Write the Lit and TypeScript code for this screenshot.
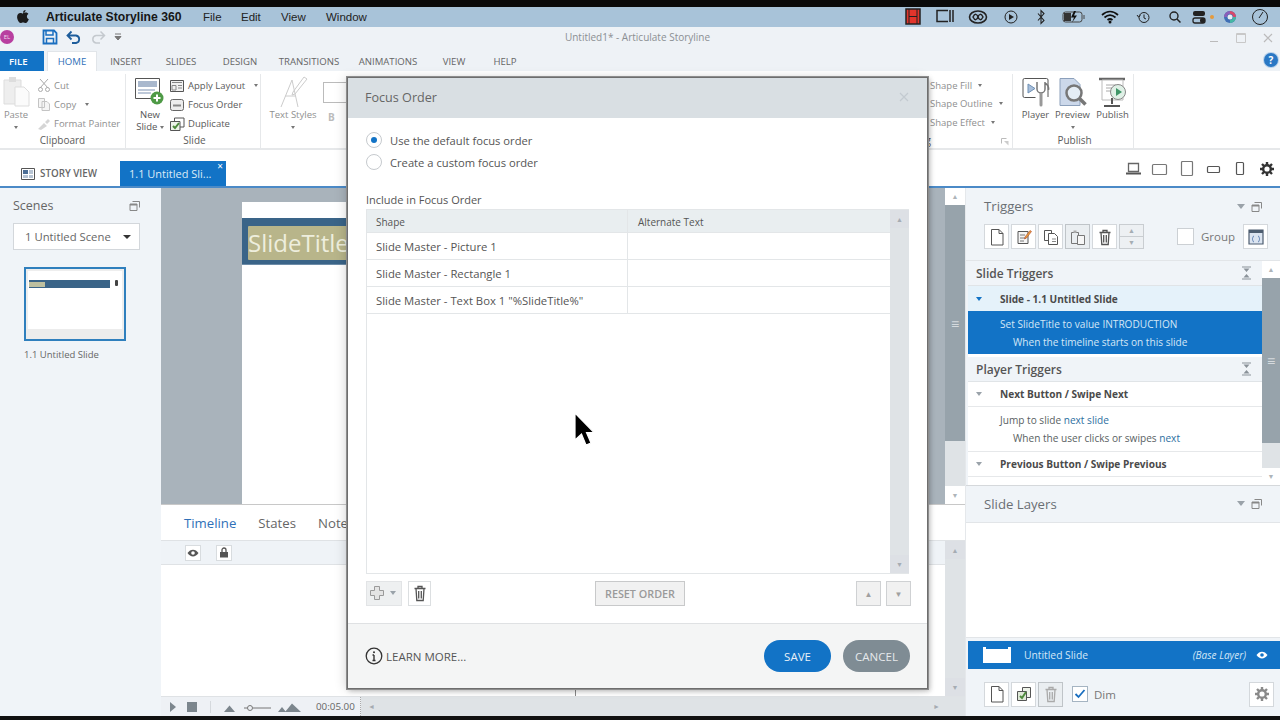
import { LitElement, css, html, svg } from 'lit'
import { customElement } from 'lit/decorators.js'

const icon = (w: number, h: number, body: unknown) => html`<svg width=${w} height=${h} viewBox="0 0 ${w} ${h}" fill="none">${body}</svg>`

const pageIcon = svg`<path d="M4.500 2.500h7.500l4 4v11.500h-11.500z" fill="#fff" stroke="#555"/><path d="M12 2.500v4h4" stroke="#555"/>`
const trashIcon = (c = '#666') => svg`<path d="M4.500 5.500h11M8 5.500v-2h4v2M6 5.500l.8 12h6.400l.8-12M8.700 8v7.500M11.300 8v7.500" stroke=${c} stroke-width="1.300"/>`
const restoreIcon = svg`<path d="M3.500 1.500h7v6M1 4h7v6.500h-7z" stroke="#888"/><path d="M1 4h7v1.500h-7z" fill="#888"/>`
const gearIcon = (c: string) => svg`<circle cx="10" cy="10" r="3.800" stroke=${c} stroke-width="2.400"/><path d="M10 3v3M10 14v3M3 10h3M14 10h3M5 5l2 2M13 13l2 2M15 5l-2 2M7 13l-2 2" stroke=${c} stroke-width="2.400"/>`
const collapseIcon = svg`<path d="M1 1h9M1 13h9" stroke="#8a9299"/><path d="M2.500 2.500h6l-3 3.500zM2.500 11.500h6l-3-3.500z" fill="#8a9299"/>`

@customElement('app-root')
export class AppRoot extends LitElement {
  renderMenuBar() {
    return html`
      <div class="menubar">
        <span class="apple">${icon(14, 16, svg`<path d="M10.600 1c.1 1.300-1.100 2.800-2.600 2.700-.1-1.300 1.200-2.700 2.600-2.700zM7.900 4.300c.7 0 1.700-.8 3-.7 1.100 0 2 .6 2.500 1.400-2.200 1.300-1.800 4.300.4 5.200-.6 1.600-1.800 3.800-3.200 3.800-.9 0-1.300-.6-2.500-.6s-1.700.6-2.500.6c-1.600 0-3.500-3.300-3.500-6 0-2.600 1.600-3.900 3.200-3.900 1.200 0 2 .7 2.600.7z" fill="#1c1c1c"/>`)}</span>
        <b>Articulate Storyline 360</b>
        <span>File</span><span>Edit</span><span>View</span><span>Window</span>
        <svg class="tray" width="370" height="20" viewBox="900 0 370 20" fill="none">
          <rect x="906" y="2" width="14" height="15" fill="#e2352c" stroke="#222" stroke-width="1.500"/><path d="M909 2v15M917 2v15M909 9.500h8" stroke="#222"/>
          <path d="M948 3.500h-11v11h11M950 3v12M953 3v12" stroke="#222" stroke-width="1.500"/>
          <ellipse cx="978" cy="10" rx="8.500" ry="6" stroke="#222" stroke-width="1.600"/><path d="M973 10c2-4 4-3 5 0s3 4 5 0c-2-4-4-3-5 0s-3 4-5 0z" stroke="#222" stroke-width="1.500"/>
          <circle cx="1011" cy="10" r="6" stroke="#222"/><path d="M1009 7l5 3-5 3z" fill="#222"/>
          <path d="M1038 6.500l6 7-3 3v-13l3 3-6 7" stroke="#222" stroke-width="1.100"/>
          <rect x="1063" y="5" width="19" height="10" rx="2.500" stroke="#444"/><rect x="1064" y="6" width="7" height="8" fill="#333"/><path d="M1074 4l-3 6.500h3l-2 5 5-7h-3l2-4.500z" fill="#111"/><path d="M1084 8v4" stroke="#444"/>
          <path d="M1102 8c5-4.500 11-4.500 16 0M1104.500 10.500c3.500-3 7.500-3 11 0M1107.500 13c1.500-1.200 3.500-1.200 5 0" stroke="#111" stroke-width="1.700"/><circle cx="1110" cy="15" r="1.500" fill="#111"/>
          <circle cx="1144" cy="10.500" r="5" stroke="#222"/><path d="M1144 7.500v3.500l2 1M1137 8l1.500 2 2-1.500" stroke="#222"/>
          <circle cx="1174" cy="9" r="4" stroke="#222" stroke-width="1.400"/><path d="M1177 12l3.500 3.500" stroke="#222" stroke-width="1.500"/>
          <rect x="1193" y="4" width="12" height="5" rx="2" fill="#222"/><rect x="1193" y="11" width="12" height="5" rx="2" stroke="#222" stroke-width="1.300"/><rect x="1200" y="11" width="5" height="5" rx="2" fill="#222"/>
          <circle cx="1212" cy="10" r="2" fill="#e59a3c"/>
          <circle cx="1230" cy="10" r="6" fill="#3f6fb5"/><path d="M1230 4a6 6 0 0 1 6 6h-3a3 3 0 0 0-3-3z" fill="#d8486a"/><path d="M1224 10a6 6 0 0 1 6-6v3a3 3 0 0 0-3 3z" fill="#8c5fb8"/><path d="M1230 16a6 6 0 0 0 6-6h-3a3 3 0 0 1-3 3z" fill="#45b7a3"/><circle cx="1230" cy="10" r="2.500" fill="#e8eef3"/>
          <circle cx="1260" cy="10" r="7.500" stroke="#222"/><path d="M1259 11l4-6" stroke="#222"/>
        </svg>
      </div>`
  }

  renderTitleBar() {
    return html`
      <div class="titlebar">
        <span class="avatar">EL</span>
        <span class="qat">
          ${icon(16, 16, svg`<path d="M1.500 1.500h10.500l2.500 2.500v10.500h-13z" stroke="#1a6fc0" stroke-width="1.800"/><path d="M4 2v4h7V2M4.500 14.500v-5h7v5" stroke="#1a6fc0" stroke-width="1.500"/>`)}
          ${icon(16, 14, svg`<path d="M2 5.500h8a3.800 3.800 0 0 1 0 7.500H6M5.500 1.500L1.500 5.500l4 4" stroke="#1d5d9b" stroke-width="1.800"/>`)}
          ${icon(16, 14, svg`<path d="M14 5.500H6a3.800 3.800 0 0 0 0 7.500h4M10.500 1.500l4 4-4 4" stroke="#c4c9ce" stroke-width="1.500"/>`)}
          ${icon(8, 8, svg`<path d="M1 1h6M1 3.500h6L4 7z" stroke="#777" fill="#777"/>`)}
        </span>
        <span class="doc-title">Untitled1* - Articulate Storyline</span>
        <span class="winbtns">
          ${icon(10, 10, svg`<path d="M1 8.500h8" stroke="#bbb"/>`)}
          ${icon(10, 10, svg`<path d="M.5.500h9v9h-9z" stroke="#c8c8c8"/><path d="M.5 1.500h9" stroke="#c8c8c8"/>`)}
          ${icon(10, 10, svg`<path d="M1 1l8 8M9 1l-8 8" stroke="#bbb" stroke-width="1.200"/>`)}
        </span>
      </div>`
  }

  renderTabs() {
    return html`
      <div class="tabs">
        <span class="file">FILE</span>
        <span class="tab active">HOME</span>
        <span class="tab insert">INSERT</span>
        <span class="tab slides">SLIDES</span>
        <span class="tab design">DESIGN</span>
        <span class="tab trans">TRANSITIONS</span>
        <span class="tab anim">ANIMATIONS</span>
        <span class="tab view">VIEW</span>
        <span class="tab help">HELP</span>
        <span class="help-btn">?</span>
      </div>`
  }

  renderRibbon() {
    return html`
      <div class="ribbon">
        <div class="group clipboard">
          <div class="group-body">
            <div class="big dim">
              ${icon(30, 33, svg`<path d="M3 6h17v24h-17z" fill="#eee" stroke="#ddd"/><path d="M8 3h7v5h-7z" fill="#ddd"/><path d="M14 13h9l5 5v14h-14z" fill="#fbfbfb" stroke="#ddd"/>`)}
              <span>Paste</span><i class="caret"></i>
            </div>
            <div class="small-list dim">
              <div>${icon(14, 14, svg`<path d="M3 1l8 9M11 1l-8 9" stroke="#aaa"/><circle cx="3.500" cy="11.500" r="2" stroke="#aaa"/><circle cx="10.500" cy="11.500" r="2" stroke="#aaa"/>`)}<span>Cut</span></div>
              <div>${icon(14, 14, svg`<path d="M1.500 1.500h6v9h-6zM5 4.500h5l2.500 2.500v6.500H5z" fill="#f5f5f5" stroke="#c4c4c4"/>`)}<span>Copy</span><i class="caret"></i></div>
              <div>${icon(14, 14, svg`<path d="M1 12l6-6 3 3-6 4zM8 5l3-3 2 2-3 3z" fill="#d5d5d5"/>`)}<span>Format Painter</span></div>
            </div>
          </div>
          <label>Clipboard</label>
        </div>

        <div class="group slide-group">
          <div class="group-body">
            <div class="big new-slide">
              ${icon(32, 34, svg`<path d="M1.500 4.500h24v20h-24z" fill="#fff" stroke="#555"/><path d="M4 7h19v6h-19z" fill="#a9b8cd"/><path d="M4 16h17M4 19h13" stroke="#a9b8cd" stroke-width="1.500"/><circle cx="23" cy="24" r="6.500" fill="#4e9a46"/><path d="M23 20.500v7M19.500 24h7" stroke="#fff" stroke-width="2"/>`)}
              <span>New</span><span>Slide <i class="caret inline"></i></span>
            </div>
            <div class="small-list">
              <div>${icon(16, 14, svg`<path d="M1.500 1.500h13v11h-13z" fill="#f1f1f1" stroke="#555"/><path d="M3 3.500h10M3 6.500h4v4.500h-4zM9 6.500h4M9 9h4" stroke="#888"/>`)}<span>Apply Layout</span><i class="caret"></i></div>
              <div>${icon(16, 14, svg`<rect x="1.500" y="1.500" width="13" height="11" rx="2" fill="#ececec" stroke="#666"/><path d="M4 6.500h8v2h-8z" fill="#888"/>`)}<span>Focus Order</span></div>
              <div>${icon(16, 14, svg`<path d="M5.500 1h9.500v9h-9.500z" fill="#fff" stroke="#555"/><path d="M1.500 4.500h9.500v9h-9.500z" fill="#eef3ea" stroke="#555"/><path d="M4 9l2 2 4-5" stroke="#4e8a3c" stroke-width="2"/>`)}<span>Duplicate</span></div>
            </div>
          </div>
          <label>Slide</label>
        </div>

        <div class="group text-group">
          <div class="group-body">
            <div class="big dim text-styles">
              ${icon(30, 34, svg`<path d="M3 33L14 6l6 27M7 22h11M15 18l11-15 3 2-12 15-3 1z" stroke="#ccc"/>`)}
              <span>Text Styles</span><i class="caret"></i>
            </div>
            <div class="fmt-col"><span class="shape-box"></span><b class="bold-b">B</b></div>
          </div>
        </div>

        <div class="group drawing">
          <div class="group-body">
            <div class="small-list dim shape-list">
              <div><span>Shape Fill</span><i class="caret"></i></div>
              <div><span>Shape Outline</span><i class="caret"></i></div>
              <div><span>Shape Effect</span><i class="caret"></i></div>
            </div>
          </div>
          <label>Drawing</label>
          <span class="launcher">${icon(8, 8, svg`<path d="M.5.500h5M.5.500v5" stroke="#bbb"/><path d="M3 3h4.500v4.500z" fill="#ccc"/>`)}</span>
        </div>

        <div class="group publish">
          <div class="group-body">
            <div class="big">
              ${icon(30, 31, svg`<path d="M3.500 1.500h22a1.500 1.500 0 0 1 1.500 1.500v17M3.500 1.500a1.500 1.500 0 0 0-1.500 1.500v16a1.500 1.500 0 0 0 1.500 1.500h11" stroke="#555"/><path d="M7 7l7 4.500-7 4.500z" fill="#a9c0dc" stroke="#6f8fb3"/><path d="M16 5v7a4 4 0 0 0 8 0V5M24 6a7 7 0 0 1 3.500 7" stroke="#777" stroke-width="1.500"/><path d="M18.500 16h3v12a1.500 1.500 0 0 1-3 0z" fill="#999"/>`)}
              <span>Player</span>
            </div>
            <div class="big">
              ${icon(30, 31, svg`<path d="M2 1.500h14l6 6v21h-20z" fill="#ccd8ea" stroke="#8ca0bb"/><circle cx="16" cy="16" r="7.500" fill="#e5edf5" stroke="#777" stroke-width="2.500"/><path d="M21.500 21.500l6 6" stroke="#777" stroke-width="3.500"/>`)}
              <span>Preview</span><i class="caret"></i>
            </div>
            <div class="big pub-last">
              ${icon(32, 31, svg`<path d="M2 2h26" stroke="#666" stroke-width="2.500"/><path d="M5 3h21v20h-21z" fill="#fff" stroke="#bbb"/><path d="M9 8h10M9 11h7M9 14h7" stroke="#aaa"/><circle cx="21" cy="15" r="7.500" fill="#dff0e6" stroke="#888"/><path d="M19 11l6 4-6 4z" fill="#3f9668"/><path d="M7 29h16M15 21v6" stroke="#555" stroke-width="2"/>`)}
              <span>Publish</span>
            </div>
          </div>
          <label>Publish</label>
        </div>
      </div>`
  }

  renderViewTabs() {
    return html`
      <div class="viewtabs">
        <span class="story">
          ${icon(14, 12, svg`<path d="M.5.500h13v11h-13z" fill="#fff" stroke="#555"/><path d="M2 2h5v4h-5z" fill="#4d6f96"/><path d="M8 2h4v4h-4zM2 7h5v3h-5zM8 7h4v3h-4z" fill="#b7c4d3"/>`)}
          STORY VIEW
        </span>
        <span class="slide-tab">1.1 Untitled Sli...<i>×</i></span>
        <svg class="devices" width="150" height="16" viewBox="0 0 150 16" fill="none">
          <path d="M2.500 2.500h10v8h-10z" stroke="#666" stroke-width="1.300"/><path d="M0 12.500h15" stroke="#555" stroke-width="2"/>
          <rect x="26.500" y="3.500" width="14" height="10" rx="1" stroke="#777" stroke-width="1.200"/>
          <rect x="55.500" y=".5" width="11" height="14" rx="1" stroke="#777" stroke-width="1.200"/>
          <rect x="81.500" y="5.500" width="12" height="6" rx="1" stroke="#555" stroke-width="1.200"/>
          <rect x="110.500" y="1.500" width="7" height="12" rx="1" stroke="#555" stroke-width="1.200"/>
          <g transform="translate(131 -2)">${gearIcon('#333')}</g>
        </svg>
      </div>`
  }

  renderScenes() {
    return html`
      <aside class="scenes">
        <div class="scenes-head"><span>Scenes</span>${icon(11, 11, restoreIcon)}</div>
        <div class="scene-select"><span>1 Untitled Scene</span><i class="caret dark"></i></div>
        <div class="thumb">
          <div class="thumb-band"><span></span></div>
          <span class="thumb-pin"></span>
          <div class="thumb-foot"></div>
        </div>
        <div class="thumb-label">1.1 Untitled Slide</div>
      </aside>`
  }

  renderCenter() {
    return html`
      <main class="center">
        <div class="stage-row">
          <div class="stage">
            <div class="slide">
              <div class="band"><span class="slide-title">SlideTitle</span></div>
            </div>
          </div>
          <div class="vscroll stage-scroll">
            <span class="sb-btn">▲</span>
            <span class="sb-thumb">≡</span>
            <span class="sb-track"></span>
            <span class="sb-btn">▼</span>
          </div>
        </div>
        <div class="timeline">
          <div class="tl-tabs"><span class="on">Timeline</span><span>States</span><span>Notes</span></div>
          <div class="tl-main">
            <div class="tl-left">
              <div class="tl-tools">
                <span class="tool-btn">${icon(12, 10, svg`<path d="M.5 5c3-4.500 8-4.500 11 0-3 4.500-8 4.500-11 0z" fill="#555"/><circle cx="6" cy="5" r="1.800" fill="#fff"/>`)}</span>
                <span class="tool-btn">${icon(10, 11, svg`<path d="M3 5V3a2 2 0 0 1 4 0v2" stroke="#555" stroke-width="1.300"/><path d="M1 5h8v5.500h-8z" fill="#555"/>`)}</span>
              </div>
              <div class="tl-canvas"></div>
            </div>
            <div class="vscroll tl-scroll">
              <span class="sb-btn grey">▲</span><span class="sb-track"></span><span class="sb-btn grey">▼</span>
            </div>
          </div>
          <div class="tl-foot">
            <div class="tl-ctrl">
              ${icon(8, 12, svg`<path d="M1 1l6 5-6 5z" fill="#7c868d"/>`)}
              ${icon(10, 10, svg`<path d="M0 0h10v10H0z" fill="#7c868d"/>`)}
              <i class="divider"></i>
              ${icon(11, 7, svg`<path d="M0 7l5.500-6.500L11 7z" fill="#7c868d"/>`)}
              ${icon(28, 8, svg`<circle cx="6" cy="4" r="2.500" stroke="#777"/><path d="M0 4h3.500M9 4h18" stroke="#777"/>`)}
              ${icon(23, 9, svg`<path d="M0 9l4-5 4 5zM7 9l7-8.500L23 9z" fill="#7c868d"/>`)}
              <span class="time">00:05.00</span>
            </div>
            <div class="hscroll"><span>◄</span><span>►</span></div>
          </div>
        </div>
      </main>`
  }

  renderRight() {
    const tools = [
      pageIcon,
      svg`<path d="M4 4.500h10v12h-10z" fill="#f5f5f5" stroke="#555"/><path d="M6 8h5M6 11h6M6 14h4" stroke="#777"/><path d="M11 10l5-6.500 1.500 1-5 6.500-2 1z" fill="#e4a13c" stroke="#b5452f" stroke-width=".6"/>`,
      svg`<path d="M3.500 3.500h7v10h-7z" fill="#fff" stroke="#555"/><path d="M7.500 6.500h6l3 3v8h-9z" fill="#fff" stroke="#555"/><path d="M11 12h4M11 14.500h4" stroke="#888"/>`,
      svg`<path d="M3.500 5.500h7v11h-7z" stroke="#777"/><path d="M5.500 3.500h3v2.500h-3z" fill="#aaa"/><path d="M9.500 8.500h7v9h-7z" fill="#f6f6f6" stroke="#777"/>`,
      trashIcon('#555'),
    ]
    return html`
      <aside class="right">
        <div class="panel-head"><span>Triggers</span><i class="caret grey"></i>${icon(11, 11, restoreIcon)}</div>
        <div class="trig-tools">
          ${tools.map((t, i) => html`<span class="sq ${i === 3 ? 'off' : ''}">${icon(20, 20, t)}</span>`)}
          <span class="updown"><i>▲</i><i>▼</i></span>
          <span class="chk"></span><span class="grp">Group</span>
          <span class="sq">${icon(20, 20, svg`<path d="M3 3h14v14h-14z" fill="#dbe4f0" stroke="#4d5d70" stroke-width="1.200"/><path d="M3 3h14v3h-14z" fill="#4d5d70"/><path d="M8 9c-1.500 0-1 3-2 3 1 0 .5 3 2 3M12 9c1.500 0 1 3 2 3-1 0-.5 3-2 3" stroke="#5a7db0"/>`)}</span>
        </div>
        <div class="trig-wrap">
          <div class="trig-list">
            <div class="sec-head"><span>Slide Triggers</span>${icon(11, 14, collapseIcon)}</div>
            <div class="trig-row sel-head"><i class="tri blue"></i><b>Slide - 1.1 Untitled Slide</b></div>
            <div class="action selected"><div>Set SlideTitle to value INTRODUCTION</div><div class="ind">When the timeline starts on this slide</div></div>
            <div class="sec-head player"><span>Player Triggers</span>${icon(11, 14, collapseIcon)}</div>
            <div class="trig-row next"><i class="tri"></i><b>Next Button / Swipe Next</b></div>
            <div class="action"><div>Jump to slide <em>next slide</em></div><div class="ind">When the user clicks or swipes <em>next</em></div></div>
            <div class="trig-row top"><i class="tri"></i><b>Previous Button / Swipe Previous</b></div>
            <div class="trig-end"></div>
          </div>
          <div class="vscroll list-scroll">
            <span class="sb-btn">▲</span>
            <span class="sb-thumb">≡</span>
            <span class="sb-track"></span>
            <span class="sb-btn">▼</span>
          </div>
        </div>
        <div class="panel-head layers"><span>Slide Layers</span><i class="caret grey"></i>${icon(11, 11, restoreIcon)}</div>
        <div class="layers-body"></div>
        <div class="layer-row">
          <span class="layer-thumb"></span>
          <span class="layer-name">Untitled Slide</span>
          <em>(Base Layer)</em>
          ${icon(12, 10, svg`<path d="M.5 5c3-4.500 8-4.500 11 0-3 4.500-8 4.500-11 0z" fill="#fff"/><circle cx="6" cy="5" r="1.800" fill="#1273c6"/>`)}
        </div>
        <div class="layer-tools">
          <span class="sq">${icon(20, 20, pageIcon)}</span>
          <span class="sq">${icon(20, 20, svg`<path d="M8.500 3.500h8v10h-8z" fill="#eef3ea" stroke="#555"/><path d="M3.500 7.500h9v9h-9z" fill="#dfe9d8" stroke="#555"/><path d="M6 12l2 2 4-6" stroke="#4e8a3c" stroke-width="2"/>`)}</span>
          <span class="sq off">${icon(20, 20, trashIcon('#aaa'))}</span>
          <span class="chk checked">${icon(14, 14, svg`<path d="M2.500 7l3 3 6-7" stroke="#1a6fc0" stroke-width="1.800"/>`)}</span>
          <span class="dim-lbl">Dim</span>
          <span class="sq gear">${icon(20, 20, gearIcon('#8a8a8a'))}</span>
        </div>
      </aside>`
  }

  renderDialog() {
    const rows = ['Slide Master - Picture 1', 'Slide Master - Rectangle 1', 'Slide Master - Text Box 1 "%SlideTitle%"']
    return html`
      <div class="dialog">
        <div class="dlg-head"><span>Focus Order</span>${icon(10, 10, svg`<path d="M1 1l8 8M9 1l-8 8" stroke="#c3cad0" stroke-width="1.200"/>`)}</div>
        <div class="dlg-body">
          <div class="radio-row"><span class="radio on"></span>Use the default focus order</div>
          <div class="radio-row"><span class="radio"></span>Create a custom focus order</div>
          <div class="inc-label">Include in Focus Order</div>
          <div class="table">
            <div class="table-main">
              <div class="t-row t-head"><span>Shape</span><span>Alternate Text</span></div>
              ${rows.map((r) => html`<div class="t-row"><span>${r}</span><span></span></div>`)}
            </div>
            <div class="vscroll t-scroll"><span class="sb-btn grey">▲</span><span class="sb-track"></span><span class="sb-btn grey">▼</span></div>
          </div>
          <div class="t-tools">
            <span class="add-btn">
              ${icon(16, 16, svg`<path d="M5.500 1.500h5v4h4v5h-4v4h-5v-4h-4v-5h4z" fill="#e4e4e4" stroke="#9a9a9a"/>`)}
              <i class="caret grey"></i>
            </span>
            <span class="del-btn">${icon(20, 20, trashIcon('#555'))}</span>
            <span class="reset">RESET ORDER</span>
            <span class="arrow-btn">▲</span>
            <span class="arrow-btn">▼</span>
          </div>
        </div>
        <div class="dlg-foot">
          ${icon(18, 18, svg`<circle cx="9" cy="9" r="7.800" stroke="#333" stroke-width="1.300"/><path d="M9 8v5.500M7.500 13.500h3M7.500 8H9" stroke="#333" stroke-width="1.400"/><circle cx="9" cy="5.200" r="1" fill="#333"/>`)}
          <span class="learn">LEARN MORE...</span>
          <span class="pill save">SAVE</span>
          <span class="pill cancel">CANCEL</span>
        </div>
      </div>`
  }

  render() {
    return html`
      <div class="screen">
        <div class="bar-top"></div>
        ${this.renderMenuBar()} ${this.renderTitleBar()} ${this.renderTabs()} ${this.renderRibbon()} ${this.renderViewTabs()}
        <div class="workspace">${this.renderScenes()} ${this.renderCenter()} ${this.renderRight()}</div>
        <div class="bar-bottom"></div>
        ${this.renderDialog()}
        <svg class="cursor" width="22" height="36" viewBox="0 0 22 36"><path d="M2 1v27l6.500-6 4.500 11 5-2-4.500-10.500H21z" fill="#000" stroke="#fff" stroke-width="1.200"/></svg>
      </div>
    `
  }

  static styles = css`
    :host {
      display: block;
      width: 1280px;
      height: 720px;
      overflow: hidden;
      font-family: 'Open Sans', 'Noto Sans', sans-serif;
      color: #555;
    }
    svg { display: block; flex: none; }
    i { font-style: normal; }

    .screen { position: relative; display: flex; flex-direction: column; width: 1280px; height: 720px; overflow: hidden; background: #fff; }
    .bar-top { height: 7px; background: #0a0a0a; flex: none; }
    .bar-bottom { height: 4px; background: #111; flex: none; }

    .caret { display: inline-block; width: 0; height: 0; border-left: 2.500px solid transparent; border-right: 2.500px solid transparent; border-top: 3px solid #777; }
    .caret.dark { border-left-width: 4px; border-right-width: 4px; border-top: 4px solid #333; }
    .caret.grey { border-left-width: 4px; border-right-width: 4px; border-top: 5px solid #9aa2a9; }

    .menubar { height: 20px; flex: none; display: flex; align-items: center; background: #a8c3d9; color: #222; font-family: 'Liberation Sans', sans-serif; font-size: 11.500px; }
    .apple { margin-left: 15px; width: 31px; }
    .menubar b { width: 157px; font-size: 12.200px; color: #161616; white-space: nowrap; }
    .menubar span:nth-of-type(2) { width: 38px; }
    .menubar span:nth-of-type(3) { width: 40px; }
    .menubar span:nth-of-type(4) { width: 45px; }
    .tray { margin-left: auto; margin-right: 10px; }

    .titlebar { height: 24px; flex: none; display: flex; align-items: center; background: #eef2f6; padding-bottom: 4px; box-sizing: border-box; }
    .avatar { width: 14px; height: 14px; border-radius: 50%; background: #b83fa0; color: #f2d9ee; font-size: 6px; display: flex; align-items: center; justify-content: center; flex: none; }
    .qat { display: flex; align-items: center; gap: 8px; margin-left: 28px; }
    .doc-title { flex: 1; text-align: center; font-size: 10px; color: #8b8f93; padding-right: 56px; }
    .winbtns { display: flex; gap: 17px; margin-right: 7px; margin-top: 2px; }

    .tabs { height: 20px; flex: none; display: flex; align-items: stretch; background: #eef2f6; font-size: 9.600px; color: #666; }
    .tabs span { display: flex; align-items: center; justify-content: center; }
    .tabs .file { width: 44px; background: #1273c6; color: #fff; font-weight: 600; justify-content: flex-start; padding-left: 9px; box-sizing: border-box; }
    .tab { flex: none; }
    .tab.active { width: 50px; margin-left: 3px; background: #fff; color: #2f70b8; border: 1px solid #e1e5e9; border-bottom: 0; box-sizing: border-box; }
    .insert { width: 58px; }
    .slides { width: 52px; }
    .design { width: 66px; }
    .trans { width: 72px; }
    .anim { width: 86px; }
    .view { width: 46px; }
    .help { width: 56px; }
    .tabs .help-btn { margin-left: auto; margin-right: 2px; margin-top: 2px; width: 14px; height: 14px; border-radius: 50%; background: #2a78c4; color: #fff; font-size: 10px; font-weight: 700; box-shadow: 0 0 0 1px #b9d2ea; }

    .ribbon { height: 79px; flex: none; display: flex; background: #fff; border-bottom: 2px solid #e6e8ea; box-sizing: border-box; font-size: 9.500px; color: #707070; padding-top: 3px; }
    .group { position: relative; display: flex; flex-direction: column; box-sizing: border-box; flex: none; border-right: 1px solid #e6e8ea; height: 75px; }
    .group-body { flex: 1; display: flex; min-height: 0; }
    .group label { text-align: center; font-size: 10px; color: #5c5c5c; height: 16px; line-height: 14px; }
    .big { display: flex; flex-direction: column; align-items: center; line-height: 12px; }
    .big svg { margin-bottom: 2px; }
    .big .caret { margin-top: 5px; }
    .caret.inline { vertical-align: middle; margin-top: 0; }
    .dim, .dim span { color: #8f8f8f; }
    .small-list { display: flex; flex-direction: column; padding-top: 2px; }
    .small-list > div { display: flex; align-items: center; gap: 3px; height: 19.500px; white-space: nowrap; }
    .small-list .caret { margin-left: 6px; }

    .clipboard { width: 126px; }
    .clipboard .big { width: 32px; }
    .clipboard .small-list { margin-left: 5px; gap: .3px; }
    .clipboard .small-list > div { gap: 3px; }
    .slide-group { width: 135px; }
    .slide-group label { padding-left: 3px; }
    .slide-group .big { margin-left: 8px; width: 32px; color: #555; }
    .slide-group .small-list { margin-left: 3px; color: #5a5a5a; }
    .new-slide svg { margin-bottom: 1px; }
    .text-group { width: 536px; border-right: 0; }
    .text-styles { width: 50px; margin-left: 7px; }
    .text-styles svg { margin-bottom: 1px; }
    .fmt-col { display: flex; flex-direction: column; margin-left: 5px; }
    .shape-box { width: 50px; height: 21px; border: 1px solid #bbb; box-sizing: border-box; margin-top: 8px; }
    .bold-b { font-size: 10px; color: #bbb; margin-top: 7px; margin-left: 5px; }
    .drawing { width: 216px; }
    .drawing .group-body { justify-content: flex-end; }
    .shape-list { margin-right: 5px; width: 77px; }
    .shape-list > div { height: 18.500px; gap: 0; }
    .drawing label { padding-left: 14px; }
    .launcher { position: absolute; right: 3px; bottom: 3px; }
    .publish { width: 121px; padding-left: 3px; }
    .publish .big { width: 37px; color: #5a5a5a; }
    .publish .big svg { margin-bottom: 1px; }
    .publish .group-body { padding-left: 1px; padding-top: 3px; }
    .pub-last { margin-left: 3px; }

    .viewtabs { height: 38px; flex: none; display: flex; align-items: flex-end; background: #fff; border-bottom: 2px solid #4b8ac7; box-sizing: border-box; font-size: 10px; }
    .story { display: flex; align-items: center; gap: 5px; margin-left: 21px; width: 99px; height: 25px; color: #666; font-size: 9.800px; font-weight: 600; }
    .slide-tab { position: relative; width: 106px; height: 25px; background: #1273c6; color: #dcebf7; font-size: 11px; display: flex; align-items: center; padding-left: 9px; box-sizing: border-box; }
    .slide-tab i { position: absolute; right: 3px; top: -2px; font-size: 10px; color: #fff; }
    .devices { margin-left: auto; margin-right: 4px; margin-bottom: 9px; }

    .workspace { flex: 1; min-height: 0; display: flex; }

    .scenes { width: 161px; flex: none; background: #f0f4f8; box-sizing: border-box; padding: 9px 21px 0 13px; font-size: 10px; }
    .scenes-head { display: flex; justify-content: space-between; align-items: center; font-size: 12.500px; color: #666; height: 17px; }
    .scene-select { margin-top: 9px; height: 27px; background: #fff; border: 1px solid #d3d7db; box-sizing: border-box; display: flex; align-items: center; justify-content: space-between; padding: 0 8px 0 11px; font-size: 11.300px; color: #666; }
    .thumb { margin: 17px 0 0 11px; width: 102px; height: 74px; border: 2px solid #2f7fbd; box-sizing: border-box; background: #fff; display: flex; flex-direction: column; position: relative; box-shadow: inset 0 0 0 2px #eee; }
    .thumb-band { margin: 11px 14px 0 3px; height: 8px; background: #3a6488; }
    .thumb-band span { display: block; width: 16px; height: 5px; background: #bdbf9f; position: relative; top: 2px; }
    .thumb-pin { position: absolute; right: 6px; top: 11px; width: 3px; height: 6px; background: #444; border-radius: 1px; }
    .thumb-foot { margin-top: auto; height: 10px; background: #ececec; }
    .thumb-label { margin: 7px 0 0 11px; font-size: 9.500px; color: #666; white-space: nowrap; }

    .center { width: 804px; flex: none; display: flex; flex-direction: column; min-height: 0; }
    .stage-row { height: 317px; flex: none; display: flex; border-bottom: 1px solid #c8c8c8; box-sizing: border-box; }
    .stage { flex: 1; background: #a9b3bb; padding: 14px 0 0 81px; overflow: hidden; }
    .slide { width: 620px; height: 400px; background: #fff; padding-top: 16px; box-sizing: border-box; }
    .band { height: 47px; background: #3a6488; padding: 8px 0 0 6px; box-sizing: border-box; border-bottom: 1px solid #6d8ca8; }
    .slide-title { display: block; width: 300px; height: 34px; background: #b8b58a; color: #eeeedd; font-size: 24px; line-height: 34px; border-radius: 1px; }

    .vscroll { display: flex; flex-direction: column; flex: none; }
    .sb-btn { height: 18px; background: #fff; color: #aeb4b9; font-size: 7px; display: flex; align-items: center; justify-content: center; flex: none; }
    .sb-btn.grey { background: #dde0e5; color: #a6acb3; }
    .sb-thumb { background: #97a3ab; color: #d5dade; display: flex; align-items: center; justify-content: center; font-size: 14px; flex: none; }
    .sb-track { flex: 1; background: #dfe3e6; }
    .stage-scroll { width: 20px; }
    .stage-scroll .sb-btn:first-child { height: 17px; }
    .stage-scroll .sb-thumb { height: 236px; }

    .timeline { flex: 1; min-height: 0; display: flex; flex-direction: column; background: #fff; }
    .tl-tabs { height: 36px; flex: none; display: flex; align-items: center; gap: 22px; padding-left: 23px; font-size: 13.200px; color: #666; border-bottom: 1px solid #dfe2e5; box-sizing: border-box; }
    .tl-tabs .on { color: #2f70b8; }
    .tl-main { flex: 1; min-height: 0; display: flex; }
    .tl-left { flex: 1; display: flex; flex-direction: column; }
    .tl-tools { height: 24px; flex: none; background: #eff3f7; display: flex; align-items: center; gap: 15px; padding-left: 24px; border-bottom: 1px solid #dfe2e5; box-sizing: border-box; }
    .tool-btn { width: 16px; height: 16px; background: #fff; border: 1px solid #d8dcdf; box-sizing: border-box; display: flex; align-items: center; justify-content: center; }
    .tl-canvas { flex: 1; background: linear-gradient(#8a8a8a, #8a8a8a) 414px 0 / 1px 100% no-repeat #fff; }
    .tl-scroll { width: 20px; background: #dfe3e6; }
    .tl-foot { height: 20px; flex: none; display: flex; background: #eef1f5; border-top: 1px solid #dfe2e5; box-sizing: border-box; }
    .tl-ctrl { width: 200px; flex: none; display: flex; align-items: center; padding-left: 8px; box-sizing: border-box; border-right: 1px dotted #aaa; }
    .tl-ctrl > svg:nth-child(2) { margin-left: 10px; }
    .tl-ctrl > svg:nth-child(4) { margin-left: 13px; margin-top: 3px; }
    .tl-ctrl > svg:nth-child(5) { margin-left: 9px; margin-top: 2px; }
    .tl-ctrl > svg:nth-child(6) { margin-left: 6px; margin-top: 2px; }
    .divider { width: 1px; height: 12px; background: #d5d9dd; margin-left: 13px; }
    .time { font-size: 9.800px; margin-left: 15px; color: #666; }
    .hscroll { flex: 1; display: flex; justify-content: space-between; align-items: center; background: #dfe3e6; color: #a5abb1; font-size: 7px; padding: 0 25px 0 7px; }

    .right { flex: 1; min-width: 0; display: flex; flex-direction: column; background: #f0f4f8; border-left: 1px solid #e5e8eb; box-sizing: border-box; }
    .panel-head { height: 36px; flex: none; display: flex; align-items: center; padding-left: 18px; font-size: 13.200px; color: #6a6f74; }
    .panel-head span { flex: 1; }
    .panel-head svg { margin: 0 18px 0 6px; }
    .trig-tools { height: 25px; flex: none; display: flex; align-items: center; gap: 2px; padding-left: 18px; font-size: 11.500px; }
    .sq { width: 25px; height: 25px; background: #fff; border: 1px solid #d4d8dc; box-sizing: border-box; display: flex; align-items: center; justify-content: center; flex: none; }
    .sq.off { background: #eaeef1; border-color: #bfc4c8; }
    .updown { width: 25px; height: 25px; border: 1px solid #c9cdd1; box-sizing: border-box; display: flex; flex-direction: column; background: #edf0f3; color: #a6adb3; font-size: 7px; text-align: center; }
    .updown i { flex: 1; line-height: 11px; }
    .updown i:first-child { border-bottom: 1px solid #c9cdd1; }
    .chk { width: 17px; height: 17px; background: #fff; border: 1px solid #ccd0d4; box-sizing: border-box; margin-left: 31px; flex: none; display: flex; align-items: center; justify-content: center; }
    .grp { margin: 0 6px 0 5px; color: #777; }
    .trig-wrap { height: 226px; flex: none; margin-top: 11px; display: flex; border-top: 1px solid #e2e5e8; padding-left: 2px; box-sizing: border-box; border-bottom: 1px solid #d5d8db; }
    .trig-list { flex: 1; min-width: 0; background: #fff; font-size: 10.200px; }
    .sec-head { height: 25px; display: flex; align-items: center; justify-content: space-between; padding: 0 10px 0 8px; background: #f0f4f8; font-size: 12px; color: #555; font-weight: 600; border-bottom: 1px solid #e0e4e7; box-sizing: border-box; }
    .sec-head.player { margin-top: 3px; }
    .trig-row { height: 26px; display: flex; align-items: center; color: #444; border-bottom: 1px solid #e6e8ea; box-sizing: border-box; }
    .trig-row.next { height: 25px; }
    .trig-row.top { border-top: 1px solid #e6e8ea; margin-top: 1px; }
    .trig-row b { font-weight: 700; font-size: 10.100px; color: #4a4a4a; }
    .tri { width: 0; height: 0; margin: 0 18px 0 8px; border-left: 3.500px solid transparent; border-right: 3.500px solid transparent; border-top: 4.500px solid #9aa2a9; }
    .tri.blue { border-top-color: #1273c6; }
    .sel-head { background: #e5f2fa; border-bottom: 0; height: 25px; }
    .action { padding: 4px 0 4px 32px; line-height: 18px; height: 43px; box-sizing: border-box; color: #5a5f63; font-size: 10.100px; white-space: nowrap; }
    .action em { font-style: normal; color: #2d6f9f; }
    .action .ind { padding-left: 13px; }
    .action.selected { background: #1273c6; color: #d4e7f6; }
    .trig-end { height: 8px; }
    .list-scroll { width: 18px; }
    .list-scroll .sb-btn { height: 17px; }
    .list-scroll .sb-thumb { height: 165px; }
    .layers { height: 37px; border-bottom: 1px solid #e2e5e8; box-sizing: border-box; padding-bottom: 1px; }
    .layers-body { flex: 1; background: #fff; border-bottom: 1px solid #e2e5e8; }
    .layer-row { height: 28px; flex: none; margin: 3px 0 0 2px; display: flex; align-items: center; background: #1273c6; color: #d4e7f6; font-size: 10.300px; padding: 0 12px 0 15px; }
    .layer-thumb { width: 28px; height: 16px; background: #fff; margin-right: 13px; clip-path: polygon(0 0, 3px 0, 3px 2px, 25px 2px, 25px 0, 100% 0, 100% 100%, 0 100%); }
    .layer-name { flex: 1; }
    .layer-row em { margin-right: 10px; font-size: 10px; }
    .layer-tools { height: 47px; flex: none; display: flex; align-items: center; gap: 2px; padding-left: 18px; font-size: 11.500px; color: #777; }
    .layer-tools .sq { margin-top: 3px; }
    .layer-tools .chk { width: 16px; height: 16px; margin: 3px 0 0 7px; border-color: #a5b4c2; }
    .dim-lbl { margin: 3px 0 0 4px; }
    .gear { margin-left: auto; margin-right: 6px; }

    .dialog { position: absolute; left: 347px; top: 77px; width: 581px; height: 612px; background: #fff; border: 1px solid #6e6e6e; box-sizing: border-box; box-shadow: 0 0 0 1px #8d8d8d, 2px 2px 5px rgba(0, 0, 0, .25), -3px 0 10px rgba(0, 0, 0, .12); display: flex; flex-direction: column; font-size: 11.200px; color: #555; }
    .dlg-head { height: 40px; flex: none; background: #d9dfe3; display: flex; align-items: center; justify-content: space-between; padding: 0 18px 2px 17px; box-sizing: border-box; font-size: 12.600px; color: #666; }
    .dlg-body { flex: 1; min-height: 0; padding: 11px 16px 0 18px; border-bottom: 1px solid #dfe1e3; box-sizing: border-box; display: flex; flex-direction: column; }
    .radio-row { height: 22px; display: flex; align-items: center; gap: 8px; flex: none; }
    .radio { width: 16px; height: 16px; border-radius: 50%; border: 1px solid #c6cace; box-sizing: border-box; display: flex; align-items: center; justify-content: center; }
    .radio.on::after { content: ''; width: 6px; height: 6px; border-radius: 50%; background: #1273c6; }
    .inc-label { margin-top: 18px; height: 18px; line-height: 17px; flex: none; font-size: 11px; }
    .table { height: 365px; flex: none; display: flex; border: 1px solid #e3e6e8; border-right: 0; box-sizing: border-box; margin-right: 2px; }
    .table-main { flex: 1; min-width: 0; }
    .t-row { display: grid; grid-template-columns: 261px 1fr; height: 27px; border-bottom: 1px solid #e3e6e8; box-sizing: border-box; }
    .t-row span { display: flex; align-items: center; padding: 1px 0 0 9px; font-size: 11.300px; white-space: nowrap; }
    .t-row span:first-child { border-right: 1px solid #e3e6e8; }
    .t-row.t-head { height: 23px; background: #e9eef0; }
    .t-row.t-head span { font-size: 10px; color: #555; }
    .t-row.t-head span:last-child { padding-left: 10px; }
    .t-scroll { width: 19px; background: #dde0e5; }
    .t-tools { display: flex; align-items: center; margin-top: 6px; flex: none; height: 26px; }
    .add-btn { width: 36px; height: 25px; background: #eef0f1; border: 1px solid #e2e4e6; box-sizing: border-box; display: flex; align-items: center; gap: 5px; padding-left: 2px; }
    .add-btn .caret { border-left-width: 3px; border-right-width: 3px; border-top-width: 4px; }
    .del-btn { width: 23px; height: 25px; margin-left: 6px; border: 1px solid #dcdfe1; box-sizing: border-box; display: flex; align-items: center; justify-content: center; }
    .reset { width: 90px; height: 25px; margin-left: 164px; border: 1px solid #c8c9ca; background: #f1f1f1; box-sizing: border-box; display: flex; align-items: center; justify-content: center; font-size: 10.800px; font-weight: 600; color: #9a9a9a; }
    .arrow-btn { width: 25px; height: 25px; border: 1px solid #cfd1d3; background: #f1f1f1; box-sizing: border-box; display: flex; align-items: center; justify-content: center; color: #a0a0a0; font-size: 8px; margin-left: 5px; }
    .reset + .arrow-btn { margin-left: 171px; }
    .dlg-foot { height: 64px; flex: none; background: #f4f5f5; display: flex; align-items: center; padding: 0 17px; }
    .learn { margin-left: 3px; font-size: 11.500px; flex: 1; color: #555; }
    .pill { width: 67px; height: 32px; border-radius: 16px; display: flex; align-items: center; justify-content: center; color: #e8f1f8; font-size: 11.500px; }
    .save { background: #1273c6; margin-right: 12px; }
    .cancel { background: #7f8c94; color: #e6e9eb; }

    .cursor { position: absolute; left: 573px; top: 412px; }
  `
}
